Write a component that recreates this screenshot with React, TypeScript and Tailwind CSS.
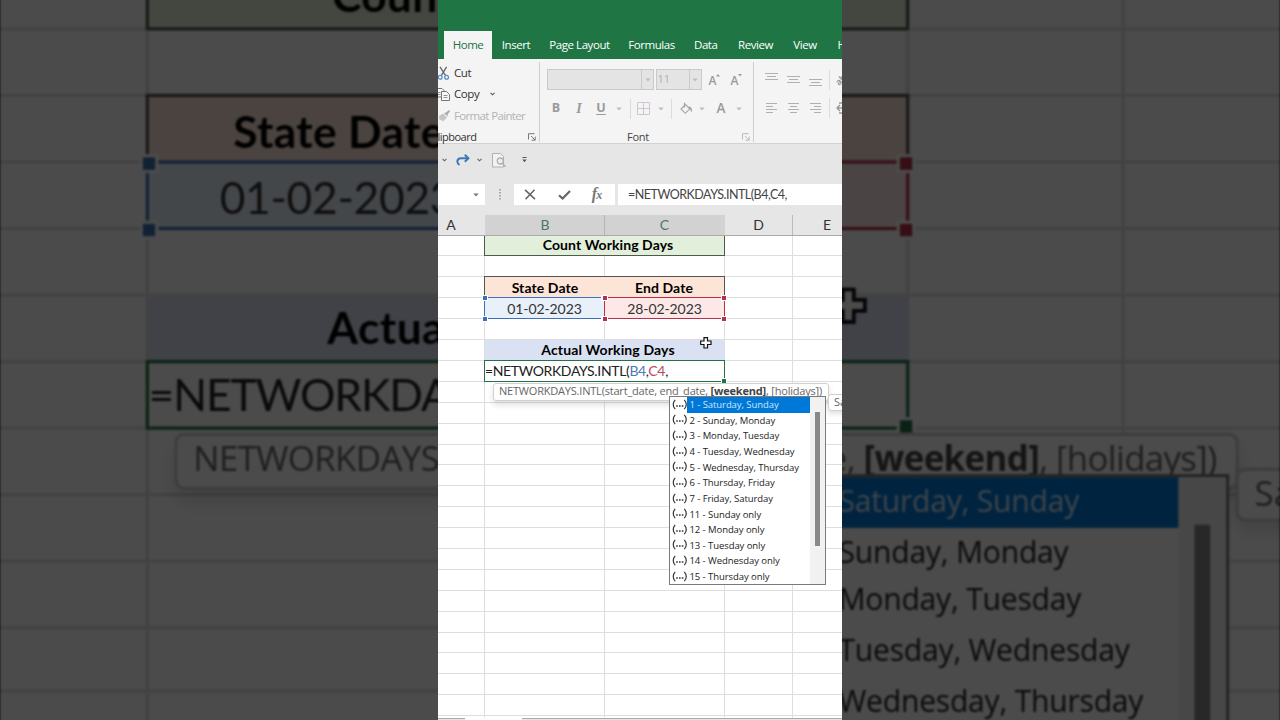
import type { ReactNode } from "react";
import clsx from "clsx";

const tabs = [
  { label: "Home", width: "w-[48px]", active: true },
  { label: "Insert", width: "w-[48px]" },
  { label: "Page Layout", width: "w-[79px]" },
  { label: "Formulas", width: "w-[65px]" },
  { label: "Data", width: "w-[43.5px]" },
  { label: "Review", width: "w-[56px]" },
  { label: "View", width: "w-[43px]" },
  { label: "Help", width: "w-[45px]" },
];

const weekendOptions = [
  "1 - Saturday, Sunday",
  "2 - Sunday, Monday",
  "3 - Monday, Tuesday",
  "4 - Tuesday, Wednesday",
  "5 - Wednesday, Thursday",
  "6 - Thursday, Friday",
  "7 - Friday, Saturday",
  "11 - Sunday only",
  "12 - Monday only",
  "13 - Tuesday only",
  "14 - Wednesday only",
  "15 - Thursday only",
];

const emptyRows = Array.from({ length: 17 }, (_, i) => i);

function Slot({ className, children }: { className: string; children?: ReactNode }) {
  return <div className={clsx("flex shrink-0 items-center justify-center", className)}>{children}</div>;
}

function Chevron({ className = "text-[#b8b8b8]" }: { className?: string }) {
  return (
    <svg width="5" height="4" viewBox="0 0 5 4" fill="none" stroke="currentColor" strokeWidth="1.1" className={className}>
      <path d="M0.5 0.8 2.5 2.8 4.5 0.8" />
    </svg>
  );
}

function Caret({ className = "text-[#bdbdbd]" }: { className?: string }) {
  return (
    <svg width="6" height="4" viewBox="0 0 6 4" fill="currentColor" className={className}>
      <path d="M0.3 0.4h5.4L3 3.6z" />
    </svg>
  );
}

function Launcher({ className }: { className: string }) {
  return (
    <svg width="8" height="8" viewBox="0 0 8 8" fill="none" stroke="currentColor" strokeWidth="1" className={className}>
      <path d="M0.5 6.5V0.7H6.5M3 3 7 7M7.2 3.6V7.2H3.6" />
    </svg>
  );
}

function TabBar() {
  return (
    <div className="flex h-[59px] items-end bg-[#207544] pl-[6px] text-[11.5px] tracking-[-0.45px] text-white">
      {tabs.map((tab) => (
        <div
          key={tab.label}
          className={clsx(
            "flex h-[28px] shrink-0 items-center justify-center whitespace-nowrap",
            tab.width,
            tab.active && "bg-[#f4f4f4] text-[#217346]",
          )}
        >
          {tab.label}
        </div>
      ))}
    </div>
  );
}

function ClipboardGroup() {
  return (
    <div className="flex w-[102px] shrink-0 flex-col border-r border-[#cfcfcf] text-[11.5px] tracking-[-0.4px] text-[#333]">
      <div className="flex h-[21px] shrink-0 items-center">
        <svg width="12" height="14" viewBox="0 0 12 14" fill="none" strokeWidth="1.3">
          <path d="M2 0.8 7.6 9.6M8.6 0.8 3.2 9.6" stroke="#666" />
          <circle cx="2.2" cy="11.2" r="1.9" stroke="#5b8fc0" />
          <circle cx="8.6" cy="11.2" r="1.9" stroke="#5b8fc0" />
        </svg>
        <span className="ml-[4px]">Cut</span>
      </div>
      <div className="flex h-[22px] shrink-0 items-center">
        <svg width="12" height="14" viewBox="0 0 12 14" fill="#f8f8f8" stroke="#777" strokeWidth="1">
          <path d="M-2 1.5H4l3 3V10H-2z" />
          <path d="M3.5 4.5h5l3 3v6h-8z" />
          <path d="M5.5 8.5h4M5.5 10.5h4M0 5.5h2.5M0 7.5h2.5" strokeWidth="0.8" />
        </svg>
        <span className="ml-[4px]">Copy</span>
        <Chevron className="ml-[11px] text-[#555]" />
      </div>
      <div className="flex h-[22px] shrink-0 items-center text-[#b3b3b3]">
        <svg width="12" height="14" viewBox="0 0 12 14" fill="#c4c4c4">
          <path d="M1 7 5 4.5 9 8.5 5 12.5 3 10.8 1.5 11z" />
          <path d="M6 4 8 3.5 11 1 12 2.5 9.8 5 9.5 7.5z" fill="#aaa" />
        </svg>
        <span className="ml-[4px] tracking-[-0.65px] whitespace-nowrap">Format Painter</span>
      </div>
      <div className="mt-[2px] flex h-[16px] shrink-0 items-center text-[11px]">
        <span className="-ml-[7px] w-[97px] tracking-[-0.5px]">Clipboard</span>
        <Launcher className="text-[#777]" />
      </div>
    </div>
  );
}

function FontGroup() {
  return (
    <div className="flex w-[214px] shrink-0 flex-col border-r border-[#cfcfcf] pl-[7px] text-[#9a9a9a]">
      <div className="mt-[7px] flex h-[22px] items-stretch text-[12px]">
        <div className="flex w-[107px] justify-end border border-[#cacaca] bg-[#e4e4e4]">
          <Slot className="w-[12px] border-l border-[#cacaca]">
            <Caret />
          </Slot>
        </div>
        <div className="ml-[1.5px] flex w-[46px] items-center justify-between border border-[#cacaca] bg-[#e4e4e4] text-[#b0b0b0]">
          <span className="ml-[1px] text-[11px]">11</span>
          <Slot className="h-full w-[12px] border-l border-[#cacaca]">
            <Caret />
          </Slot>
        </div>
        <Slot className="w-[26px] pt-[3px] text-[12px] font-semibold">
          <span>A</span>
          <svg width="4" height="3" viewBox="0 0 4 3" className="-mt-[11px]" fill="currentColor">
            <path d="M0 2.6h4L2 0z" />
          </svg>
        </Slot>
        <Slot className="w-[18px] pt-[3px] text-[12px] font-semibold">
          <span>A</span>
          <svg width="4" height="3" viewBox="0 0 4 3" className="-mt-[11px]" fill="currentColor">
            <path d="M0 0h4L2 2.6z" />
          </svg>
        </Slot>
      </div>
      <div className="mt-[8px] flex h-[22px] items-center">
        <Slot className="w-[18px] text-[12.5px] font-bold">B</Slot>
        <Slot className="w-[28px] font-['Liberation_Serif',serif] text-[14px] font-bold italic">I</Slot>
        <Slot className="w-[16px] text-[12.5px] font-bold underline underline-offset-2">U</Slot>
        <Slot className="w-[20px]">
          <Caret />
        </Slot>
        <Slot className="w-[2px]">
          <div className="h-[20px] w-px bg-[#dcdcdc]" />
        </Slot>
        <Slot className="w-[24px]">
          <svg width="13" height="13" viewBox="0 0 13 13" fill="none" stroke="#d0c5d0" strokeWidth="1">
            <path d="M0.5 0.5h12v12h-12zM6.5 0.5v12M0.5 6.5h12" />
          </svg>
        </Slot>
        <Slot className="w-[12px]">
          <Caret />
        </Slot>
        <Slot className="w-[8px]">
          <div className="h-[20px] w-px bg-[#dcdcdc]" />
        </Slot>
        <Slot className="w-[22px]">
          <svg width="13" height="13" viewBox="0 0 13 13" fill="none" stroke="#a3a3a3" strokeWidth="1.1">
            <path d="M5.5 2.5 1 7l4.3 4.3L9.8 6.8 4.5 1.5V5.5M4.5 3.5V0.8" />
            <path d="M8.5 4.6c2.5 0 3.8 1.7 3.3 5.6C10.5 9.7 10.6 8.2 9.8 6.8z" fill="#a3a3a3" stroke="none" />
          </svg>
        </Slot>
        <Slot className="w-[10px]">
          <Caret />
        </Slot>
        <Slot className="w-[28px] text-[13.5px] font-semibold">A</Slot>
        <Slot className="w-[7px]">
          <Caret />
        </Slot>
      </div>
      <div className="mt-[9.5px] flex h-[18px] items-center text-[11px] text-[#444]">
        <Slot className="w-[182px] tracking-[-0.3px]">Font</Slot>
        <Slot className="w-[34px]">
          <Launcher className="text-[#bbb]" />
        </Slot>
      </div>
    </div>
  );
}

function AlignIcon({ d }: { d: string }) {
  return (
    <Slot className="w-[22px]">
      <svg width="13" height="18" viewBox="0 0 13 18" fill="none" stroke="#b0b0b0" strokeWidth="1">
        <path d={d} />
      </svg>
    </Slot>
  );
}

function AlignmentGroup() {
  return (
    <div className="flex shrink-0 flex-col pl-[6px]">
      <div className="mt-[8px] flex h-[20px] items-center">
        <AlignIcon d="M0 2.5h13M2 5.5h9M0 8.5h13" />
        <AlignIcon d="M0 5.5h13M2 8.5h9M0 11.5h13" />
        <AlignIcon d="M0 8.5h13M2 11.5h9M0 14.5h13" />
        <Slot className="w-[6px]">
          <div className="h-[20px] w-px bg-[#dcdcdc]" />
        </Slot>
        <div className="ml-[3px] -rotate-45 text-[9px] font-bold text-[#999]">ab</div>
      </div>
      <div className="mt-[8px] flex h-[20px] items-center">
        <AlignIcon d="M1 4.5h11M1 7.5h7M1 10.5h11M1 13.5h7" />
        <AlignIcon d="M1 4.5h11M3 7.5h7M1 10.5h11M3 13.5h7" />
        <AlignIcon d="M1 4.5h11M5 7.5h7M1 10.5h11M5 13.5h7" />
        <Slot className="w-[6px]">
          <div className="h-[20px] w-px bg-[#dcdcdc]" />
        </Slot>
        <svg width="13" height="12" viewBox="0 0 13 12" fill="none" stroke="#999" strokeWidth="1.4" className="ml-[4px]">
          <path d="M1 6h6M4 3 1 6l3 3M3 1h10M3 11h10" />
        </svg>
      </div>
    </div>
  );
}

function Ribbon() {
  return (
    <div className="flex h-[85px] border-b border-[#d2d2d2] bg-[#f4f4f4] pt-[3px] pb-[1px]">
      <ClipboardGroup />
      <FontGroup />
      <AlignmentGroup />
    </div>
  );
}

function QuickAccess() {
  return (
    <div className="flex h-[32px] items-center">
      <Slot className="w-[12px]">
        <Chevron className="text-[#666]" />
      </Slot>
      <Slot className="w-[25px]">
        <svg width="14" height="13" viewBox="0 0 14 13" fill="none" stroke="#3f78b5" strokeWidth="2">
          <path d="M3.5 11C0 8.5 1 4.3 5 4.3h7" />
          <path d="M8.8 0.8 12.4 4.3 8.8 7.8" />
        </svg>
      </Slot>
      <Slot className="w-[8px]">
        <Chevron className="text-[#666]" />
      </Slot>
      <Slot className="w-[31px]">
        <svg width="14" height="15" viewBox="0 0 14 15" fill="none" stroke="#b0b0b0" strokeWidth="1">
          <path d="M0.5 0.5h8l3 3v10.5h-11z" fill="#f2f2f2" />
          <circle cx="8.3" cy="8" r="3" fill="#eee" strokeWidth="1.3" />
          <path d="m10.5 10.5 3 3.3" strokeWidth="1.5" />
        </svg>
      </Slot>
      <Slot className="w-[20px]">
        <svg width="5" height="6" viewBox="0 0 5 6" fill="#555">
          <path d="M0.5 0h4v1h-4zM0.3 2.5h4.4L2.5 5.3z" />
        </svg>
      </Slot>
    </div>
  );
}

function FormulaBar() {
  return (
    <div className="mt-[8px] flex h-[21px] items-stretch">
      <div className="flex w-[47px] items-center justify-end bg-white pr-[6px]">
        <Caret className="text-[#777]" />
      </div>
      <Slot className="w-[29px]">
        <svg width="2" height="11" viewBox="0 0 2 11" fill="#aaa">
          <path d="M0 0h2v1.5H0zM0 3h2v1.5H0zM0 6h2v1.5H0zM0 9h2v1.5H0z" />
        </svg>
      </Slot>
      <div className="flex w-[101px] items-center bg-white">
        <Slot className="w-[32px]">
          <svg width="12" height="11" viewBox="0 0 12 11" fill="none" stroke="#666" strokeWidth="1.6">
            <path d="M1 0.8 11 10.2M10.5 0.8 1.5 10.2" />
          </svg>
        </Slot>
        <Slot className="w-[36px]">
          <svg width="13" height="10" viewBox="0 0 13 10" fill="none" stroke="#666" strokeWidth="2.2">
            <path d="M1 5.2 4.6 8.5 12 1" />
          </svg>
        </Slot>
        <Slot className="w-[30px] pb-[2px] font-['Liberation_Serif',serif] text-[16px] font-bold text-[#777] italic">
          f<span className="-ml-px pt-[3px] text-[12px]">x</span>
        </Slot>
      </div>
      <div className="ml-[3px] flex flex-1 items-center bg-white pt-[1.5px] pl-[10px] font-[Lato,sans-serif] text-[12.5px] tracking-[-0.5px] text-[#444]">
        =NETWORKDAYS.INTL(B4,C4,
      </div>
    </div>
  );
}

function ColumnHeaders() {
  return (
    <div className="mt-[10px] -ml-[21.5px] grid h-[20.6px] w-[444px] shrink-0 grid-cols-[68px_120px_120px_68px_68px] border-b border-[#aaa] text-center font-[Lato,sans-serif] text-[14px] leading-[19px] text-[#333]">
      <div className="pl-px">A</div>
      <div className="border-r border-[#b5b5b5] bg-[#d2d2d2] pl-[2px] text-[#4b7568]">B</div>
      <div className="bg-[#d2d2d2] text-[#4b7568]">C</div>
      <div className="border-r border-[#bbb] pl-px">D</div>
      <div className="pl-px">E</div>
    </div>
  );
}

function Cell({ className, children }: { className?: string; children?: ReactNode }) {
  return <div className={clsx("border-r border-b border-[#dedede]", className)}>{children}</div>;
}

// one sheet row: A, then B:C (overridable), then D and E
function Row({ children }: { children?: ReactNode }) {
  return (
    <>
      <Cell />
      {children ?? (
        <>
          <Cell />
          <Cell />
        </>
      )}
      <Cell />
      <Cell />
    </>
  );
}

function RangeBox({ className, handle }: { className: string; handle: string }) {
  return (
    <div className={clsx("absolute -top-[1px] right-[-0.2px] bottom-0 -left-[0.5px] border-[1.5px]", className)}>
      <div className={clsx("absolute -top-[2.5px] -left-[2.3px] size-[4px] outline-[0.5px] outline-white", handle)} />
      <div className={clsx("absolute -top-[2.5px] -right-[2.5px] size-[4px] outline-[0.5px] outline-white", handle)} />
      <div className={clsx("absolute -bottom-[2.5px] -left-[2.3px] size-[4px] outline-[0.5px] outline-white", handle)} />
      <div className={clsx("absolute -right-[2.5px] -bottom-[2.5px] size-[4px] outline-[0.5px] outline-white", handle)} />
    </div>
  );
}

function Sheet() {
  return (
    <div className="-ml-[21.5px] grid w-[444px] shrink-0 auto-rows-[20.9px] grid-cols-[68px_120px_120px_68px_68px] bg-white text-center font-[Lato,sans-serif] text-[14px] leading-[20px] text-[#333]">
      <Row>
        <div className="col-span-2 -mt-px -ml-px border border-[#4d5a4d] bg-[#e2efda] pl-[8px] leading-[18.5px] font-bold tracking-[0.08px] text-black">
          Count Working Days
        </div>
      </Row>
      <Row />
      <Row>
        <div className="-mt-px -ml-px border-t border-l border-[#555] bg-[#fce4d6] pt-px pl-px font-bold tracking-[0.1px] text-black">
          State Date
        </div>
        <div className="-mt-px border-t border-r border-[#555] bg-[#fce4d6] pt-px font-bold tracking-[0.1px] text-black">
          End Date
        </div>
      </Row>
      <Row>
        <div className="relative bg-[#e8f0fa] pt-[0.9px] tracking-[-0.1px]">
          01-02-2023
          <RangeBox className="border-[#3f6fb5]" handle="bg-[#3f6fb5]" />
        </div>
        <div className="relative bg-[#fde8e8] pt-[0.9px] tracking-[-0.1px]">
          28-02-2023
          <RangeBox className="border-[#b5304a]" handle="bg-[#b5304a]" />
        </div>
      </Row>
      <Row />
      <Row>
        <div className="col-span-2 bg-[#d9e1f2] pl-[7px] font-bold tracking-[0.13px] text-black">Actual Working Days</div>
      </Row>
      <Row>
        <div className="relative col-span-2 pt-[0.4px] pl-[0.4px] text-left tracking-[-0.35px] whitespace-nowrap text-[#222]">
          =NETWORKDAYS.INTL(<span className="text-[#4a7ab8]">B4</span>,<span className="text-[#b84a5a]">C4</span>,
          <div className="absolute -top-[1.2px] right-[-0.2px] bottom-0 -left-[0.8px] border-[1.5px] border-[#217346]">
            <div className="absolute -right-[2.5px] -bottom-[2.5px] size-[4px] bg-[#217346] outline-[0.5px] outline-white" />
          </div>
        </div>
      </Row>
      {emptyRows.map((row) => (
        <Row key={row} />
      ))}
    </div>
  );
}

function FunctionTooltip() {
  return (
    <div className="absolute top-[383px] left-[55px] h-[18px] w-[336px] rounded-[3px] border border-[#d0d0d0] bg-white pl-[5px] text-[11px] leading-[13px] tracking-[-0.2px] whitespace-nowrap text-[#666] shadow-[0_4px_6px_rgba(0,0,0,0.12)]">
      NETWORKDAYS.INTL(start_date, end_date, <b className="text-[#444]">[weekend]</b>, [holidays])
    </div>
  );
}

function OptionHint() {
  return (
    <div className="absolute top-[394px] left-[390px] h-[17px] w-[80px] rounded-[3px] border border-[#d0d0d0] bg-white pl-[5px] text-[11px] leading-[14px] whitespace-nowrap text-[#666] shadow-[0_3px_5px_rgba(0,0,0,0.12)]">
      Saturday
    </div>
  );
}

function WeekendList() {
  return (
    <div className="absolute top-[396px] left-[231px] flex h-[189px] w-[157px] border border-[#7a7a7a] bg-white text-[9.5px] text-[#222]">
      <div className="w-[140px]">
        {weekendOptions.map((option, index) => (
          <div key={option} className="flex h-[15.64px] items-center">
            <svg width="15" height="12" viewBox="0 0 15 12" fill="none" stroke="#333" strokeWidth="1.2" className="ml-[2px] shrink-0">
              <path d="M3.2 0.8C0.6 3.5 0.6 7.5 3.2 10.2M12.3 0.8c2.6 2.7 2.6 6.7 0 9.4" />
              <path d="M4.2 7h1.6M7 7h1.6M9.8 7h1.6" strokeWidth="1.6" />
            </svg>
            <span
              className={clsx(
                "flex h-full flex-1 items-center pt-[1px] pl-[2.5px] tracking-[-0.07px] whitespace-nowrap",
                index === 0 && "bg-[#0078d7] text-[#cfe6fa]",
              )}
            >
              {option}
            </span>
          </div>
        ))}
      </div>
      <div className="w-[15px] bg-[#f1f1f1] pt-[15px]">
        <div className="ml-[5px] h-[134px] w-[5px] bg-[#888]" />
      </div>
    </div>
  );
}

function CrossCursor() {
  return (
    <svg width="12" height="12" viewBox="0 0 12 12" className="absolute top-[337px] left-[261.5px]">
      <path d="M4 0.7h3.5V4H11v3.5H7.5V11H4V7.5H0.7V4H4z" fill="#fff" stroke="#111" strokeWidth="1.2" />
    </svg>
  );
}

function Workbook({ children }: { children?: ReactNode }) {
  return (
    <div className="relative flex h-[720px] w-[404px] flex-col overflow-hidden bg-[#e6e6e6] font-['Open_Sans',sans-serif]">
      <div className="h-[235.6px] shrink-0">{children}</div>
      <div className="h-[482.4px] shrink-0 overflow-hidden">
        <Sheet />
      </div>
      {/* sheet tab strip */}
      <div className="flex h-[2px] shrink-0">
        <div className="w-[27px] border-t border-[#aaa]" />
        <div className="w-[57px] bg-white" />
        <div className="flex-1 border-t border-[#aaa]" />
      </div>
      <FunctionTooltip />
      <OptionHint />
      <WeekendList />
      <CrossCursor />
    </div>
  );
}

export default function App() {
  return (
    <div className="relative flex h-[720px] w-[1280px] items-center justify-center overflow-hidden bg-black">
      {/* enlarged, dimmed copy of the sheet fills both sides */}
      <div aria-hidden="true" className="absolute top-0 left-[438px] scale-[3.168] blur-[0.3px] brightness-[0.295]">
        <Workbook />
      </div>
      <div className="relative">
        <Workbook>
          <TabBar />
          <Ribbon />
          <QuickAccess />
          <FormulaBar />
          <ColumnHeaders />
        </Workbook>
      </div>
    </div>
  );
}
